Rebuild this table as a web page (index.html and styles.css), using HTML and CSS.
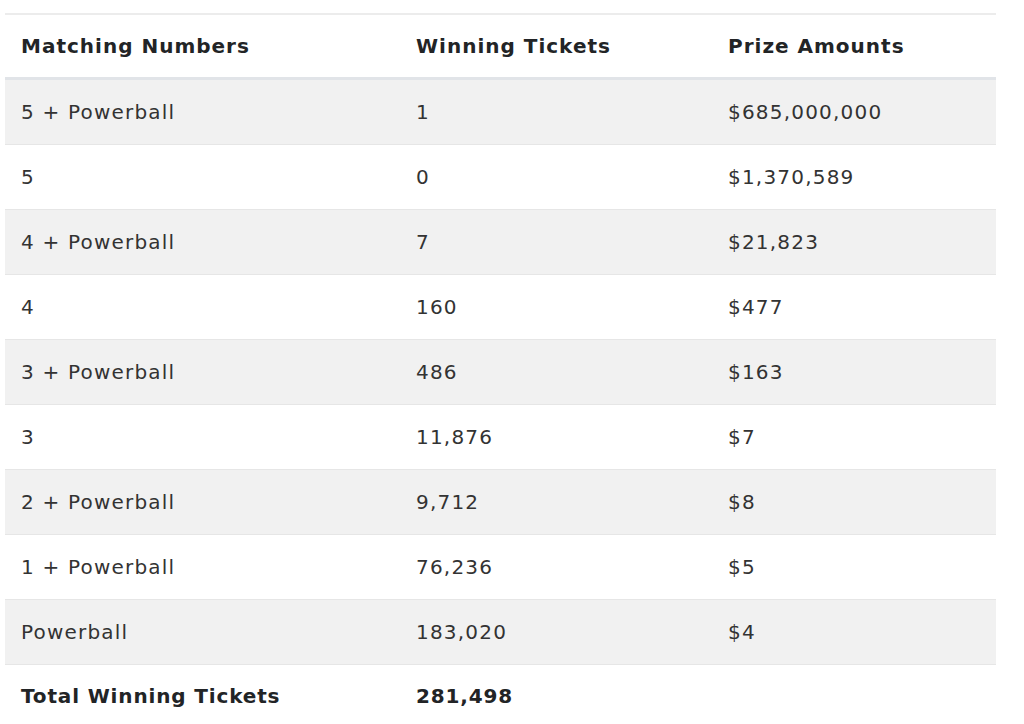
FILE: index.html
```html
<!DOCTYPE html>
<html>
<head>
<meta charset="utf-8">
<link rel="stylesheet" href="styles.css">
</head>
<body>
<div class="wrap">
<table class="prizes">
  <colgroup>
    <col class="c1"><col class="c2"><col class="c3">
  </colgroup>
  <thead>
    <tr><th>Matching Numbers</th><th>Winning Tickets</th><th>Prize Amounts</th></tr>
  </thead>
  <tbody>
    <tr class="odd"><td>5 + Powerball</td><td>1</td><td>$685,000,000</td></tr>
    <tr><td>5</td><td>0</td><td>$1,370,589</td></tr>
    <tr class="odd"><td>4 + Powerball</td><td>7</td><td>$21,823</td></tr>
    <tr><td>4</td><td>160</td><td>$477</td></tr>
    <tr class="odd"><td>3 + Powerball</td><td>486</td><td>$163</td></tr>
    <tr><td>3</td><td>11,876</td><td>$7</td></tr>
    <tr class="odd"><td>2 + Powerball</td><td>9,712</td><td>$8</td></tr>
    <tr><td>1 + Powerball</td><td>76,236</td><td>$5</td></tr>
    <tr class="odd"><td>Powerball</td><td>183,020</td><td>$4</td></tr>
    <tr class="total"><td>Total Winning Tickets</td><td>281,498</td><td></td></tr>
  </tbody>
</table>
</div>
</body>
</html>
```

FILE: styles.css
```css
html, body {
  margin: 0;
  padding: 0;
  background: #ffffff;
}
.wrap {
  padding: 13px 0 0 5px;
}
.prizes {
  width: 991px;
  table-layout: fixed;
  border-collapse: collapse;
  font-family: "DejaVu Sans", sans-serif;
  font-size: 20px;
  color: #333333;
  border-top: 2px solid #ececec;
}
.c1 { width: 395px; }
.c2 { width: 312px; }
.c3 { width: 284px; }
.prizes th {
  text-align: left;
  font-weight: bold;
  color: #222426;
  height: 62px;
  padding: 0 16px;
  border-bottom: 3px solid #e1e4e8;
  letter-spacing: 1px;
  white-space: nowrap;
}
.prizes td {
  height: 64px;
  padding: 0 16px;
  border-bottom: 1px solid #e6e6e6;
  letter-spacing: 1.2px;
  white-space: nowrap;
}
.prizes tr.odd td {
  background: #f1f1f1;
}
.prizes tr.total td {
  border-bottom: none;
  font-weight: bold;
  color: #222426;
  height: 62px;
  letter-spacing: 0.85px;
}
```
